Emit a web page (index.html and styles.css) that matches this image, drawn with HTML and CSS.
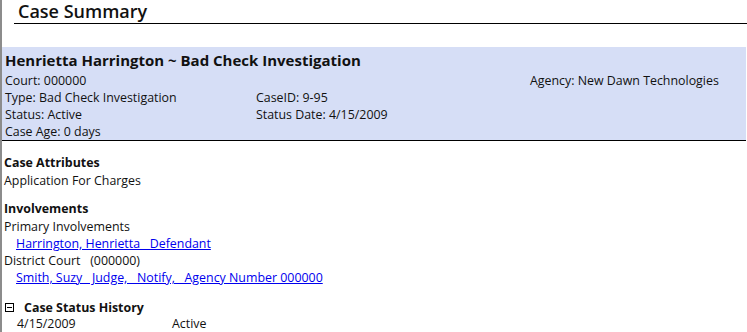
FILE: index.html
```html
<!DOCTYPE html>
<html>
<head>
<meta charset="utf-8">
<link rel="stylesheet" href="styles.css">
</head>
<body>
<div class="page">
  <h1 class="title">Case Summary</h1>
  <div class="panel">
    <div class="panel-head">Henrietta Harrington ~ Bad Check Investigation</div>
    <div class="grid">
      <div>Court: 000000</div><div></div><div class="agency">Agency: New Dawn Technologies</div>
      <div>Type: Bad Check Investigation</div><div>CaseID: 9-95</div><div></div>
      <div>Status: Active</div><div>Status Date: 4/15/2009</div><div></div>
      <div>Case Age: 0 days</div><div></div><div></div>
    </div>
  </div>
  <div class="section">
    <div class="sec-head">Case Attributes</div>
    <div class="line">Application For Charges</div>
  </div>
  <div class="section">
    <div class="sec-head">Involvements</div>
    <div class="line">Primary Involvements</div>
    <div class="line ind"><a href="#">Harrington, Henrietta   Defendant</a></div>
    <div class="line">District Court   (000000)</div>
    <div class="line ind"><a href="#">Smith, Suzy   Judge,   Notify,   Agency Number 000000</a></div>
  </div>
  <div class="section last">
    <div class="sec-head toggle"><span class="box"><span class="minus"></span></span><span>Case Status History</span></div>
    <div class="hist"><span class="date">4/15/2009</span><span>Active</span></div>
  </div>
</div>
</body>
</html>
```
FILE: styles.css
```css
html, body { margin: 0; padding: 0; background: #fff; }
body {
  font-family: "Open Sans", "Liberation Sans", sans-serif;
  font-size: 12.4px;
  color: #111;
  border-left: 2px solid #8c8c8c;
  min-height: 332px;
  box-sizing: border-box;
  overflow: hidden;
}
.title {
  margin: 0 0 0 12px;
  padding: 0 0 0 4px;
  font-size: 18px;
  font-weight: 600;
  line-height: 23px;
  border-bottom: 1px solid #000;
  height: 23px;
}
.panel {
  margin-top: 23px;
  background: #d6def6;
  border-bottom: 1px solid #000;
  padding: 1px 0 0 3px;
  margin-right: 1px;
}
.panel-head {
  font-size: 15px;
  font-weight: 700;
  line-height: 24px;
}
.grid {
  display: grid;
  grid-template-columns: 251px 274px 1fr;
  line-height: 17px;
}
.section { padding-left: 2px; margin-top: 11px; }
.panel + .section { margin-top: 13px; }
.section.last { margin-top: 13px; }
.sec-head {
  font-weight: 700;
  font-size: 12.4px;
  line-height: 18px;
}
.line { line-height: 17px; white-space: pre; }
.ind { padding-left: 12px; }
a { color: #0000ee; text-decoration: underline; }
.toggle { display: flex; align-items: center; gap: 10px; padding-left: 1px; line-height: 17px; }
.box {
  width: 7px; height: 7px;
  border: 1px solid #000;
  position: relative;
  display: inline-block;
}
.minus {
  position: absolute;
  left: 1px; right: 1px; top: 3px;
  height: 1px; background: #000;
}
.hist { display: flex; padding-left: 13px; line-height: 16px; }
.date { width: 155px; }
```
